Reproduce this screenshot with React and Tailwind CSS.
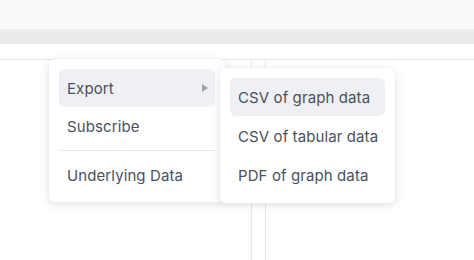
import React from 'react';

const font = { fontFamily: 'Inter, "Open Sans", sans-serif' };

const MenuRow = ({ label, active, arrow }) => (
  <div
    className={`flex items-center justify-between h-[38px] pl-2 pr-[7px] pt-[2px] rounded-md text-[15px] text-[#4b515d] whitespace-nowrap ${
      active ? 'bg-[#eef0f3]' : ''
    }`}
  >
    <span className="tracking-[0.1px]">{label}</span>
    {arrow && (
      <svg width="6" height="8" viewBox="0 0 6 8" className="-mt-[2px]">
        <path d="M0 0 L6 4 L0 8 Z" fill="#9ca3ae" />
      </svg>
    )}
  </div>
);

const App = () => {
  return (
    <div className="w-[474px] h-[260px] bg-white overflow-hidden relative" style={font}>
      {/* header area */}
      <div className="h-[29px] bg-[#f8f9fa]" />
      <div className="h-[15px] bg-gradient-to-b from-[#eaecee] to-[#e7e9eb]" />
      <div className="h-[16px] bg-white border-b border-[#e3e5e8]" />

      {/* background columns */}
      <div className="flex h-[200px]">
        <div className="w-[252px] border-r border-[#e6e8eb]" />
        <div className="w-[14px] border-r border-[#e6e8eb]" />
        <div className="flex-1" />
      </div>

      {/* main menu */}
      <div className="absolute left-[49px] top-[59px] w-[176px] bg-white rounded-md shadow-[0_2px_10px_rgba(0,0,0,0.13)] p-[10px] pb-[8px]">
        <MenuRow label="Export" active arrow />
        <MenuRow label="Subscribe" />
        <div className="my-[5px] border-t border-[#e6e8eb]" />
        <MenuRow label="Underlying Data" />
      </div>

      {/* submenu */}
      <div className="absolute left-[220px] top-[68px] w-[175px] bg-white rounded-md shadow-[0_2px_10px_rgba(0,0,0,0.13)] px-[10px] pt-[10px] pb-[9px] flex flex-col gap-[1px]">
        <MenuRow label="CSV of graph data" active />
        <MenuRow label="CSV of tabular data" />
        <MenuRow label="PDF of graph data" />
      </div>
    </div>
  );
};

export default App;
